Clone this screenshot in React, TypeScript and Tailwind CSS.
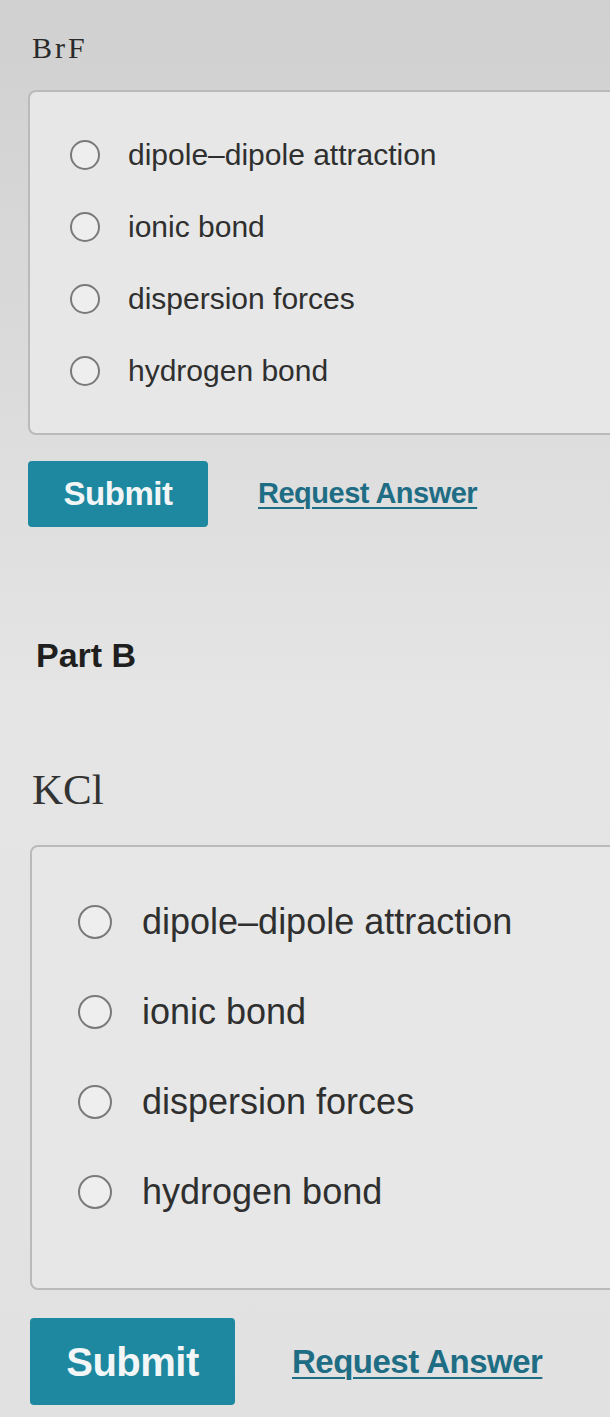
import React from "react";

const OPTIONS = [
  "dipole\u2013dipole attraction",
  "ionic bond",
  "dispersion forces",
  "hydrogen bond",
];

type Size = {
  box: string;
  list: string;
  radio: string;
  text: string;
  row: string;
  submit: string;
  link: string;
  actions: string;
};

const small: Size = {
  box: "mt-[22px] ml-[28px] -mr-[20px] h-[345px] pt-[45px] pl-[40px]",
  list: "flex flex-col gap-[36px]",
  radio: "w-[30px] h-[30px] border-[2.5px]",
  text: "text-[30px] leading-[36px]",
  row: "gap-[28px]",
  submit: "w-[180px] h-[66px] text-[33px]",
  link: "text-[29px]",
  actions: "mt-[26px] ml-[28px] gap-[50px]",
};

const big: Size = {
  box: "mt-[31px] ml-[30px] -mr-[20px] h-[445px] pt-[54px] pl-[46px]",
  list: "flex flex-col gap-[48px]",
  radio: "w-[34px] h-[34px] border-[2.5px]",
  text: "text-[36px] leading-[42px]",
  row: "gap-[30px]",
  submit: "w-[205px] h-[87px] text-[40px]",
  link: "text-[33px]",
  actions: "mt-[28px] ml-[30px] gap-[57px]",
};

function Radio({ s }: { s: Size }) {
  return <span className={`${s.radio} rounded-full border-[#7a7a7a] bg-[#eeeeee] shrink-0`} />;
}

function Question({ s }: { s: Size }) {
  return (
    <div>
      <div className={`${s.box} border-2 border-[#b9bab9] rounded-[8px] bg-[#e6e7e6]`}>
        <div className={s.list}>
          {OPTIONS.map((o) => (
            <label key={o} className={`flex items-center ${s.row}`}>
              <Radio s={s} />
              <span className={`${s.text} text-[#2f2f2f]`}>{o}</span>
            </label>
          ))}
        </div>
      </div>
      <div className={`flex items-center ${s.actions}`}>
        <button className={`${s.submit} bg-[#1d88a0] text-[#f2f6f6] font-bold rounded-[4px] tracking-[-0.5px]`}>
          Submit
        </button>
        <a className={`${s.link} text-[#1e6d84] font-bold underline underline-offset-4 decoration-2 tracking-[-0.5px]`}>
          Request Answer
        </a>
      </div>
    </div>
  );
}

export default function App() {
  return (
    <main
      className="min-h-[1417px] w-[610px] overflow-hidden bg-linear-to-b from-[#cfd0cf] via-[#e4e5e4] to-[#e0e1e0]"
      style={{ fontFamily: "'Liberation Sans', Arial, sans-serif" }}
    >
      <div className="pt-[28px] pl-[32px] text-[30px] leading-[40px] tracking-[3px] text-[#2a2a2a] font-['Liberation_Serif',serif]">
        BrF
      </div>
      <Question s={small} />

      <div className="mt-[108px] pl-[36px] text-[34px] leading-[40px] font-bold text-[#1f1f1f]">Part B</div>

      <div className="mt-[91px] pl-[32px] text-[43px] leading-[48px] text-[#333] font-['Liberation_Serif',serif]">
        KCl
      </div>
      <Question s={big} />
    </main>
  );
}
